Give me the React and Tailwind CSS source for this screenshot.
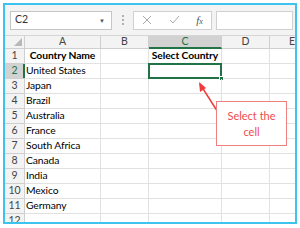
import React from "react";

const countries = ["United States","Japan","Brazil","Australia","France","South Africa","Canada","India","Mexico","Germany"];

function Row({ n, a, c, boldA, boldC, selected }) {
  return (
    <>
      <div className={`h-[15px] border-r border-b border-[#cfcfcf] flex items-center justify-center text-[10.5px] ${selected ? "bg-[#d2d2d2] text-[#217346]" : "bg-[#f3f3f3] text-[#444]"} relative`}>
        {n}
        {selected && <span className="absolute right-[-1px] top-0 bottom-0 w-[2px] bg-[#217346]" />}
      </div>
      <div className={`h-[15px] border-r border-b border-[#e1e1e1] flex items-center text-[10.3px] tracking-[-0.1px] text-black whitespace-nowrap ${boldA ? "justify-center font-bold" : "pl-[1px]"}`}>{a}</div>
      <div className="h-[15px] border-r border-b border-[#e1e1e1]" />
      <div className={`h-[15px] border-r border-b border-[#e1e1e1] flex items-center justify-center text-[10.3px] tracking-[-0.1px] text-black whitespace-nowrap relative ${boldC ? "font-bold" : ""}`}>
        {c}
        {selected && (
          <>
            <span className="absolute left-[-1px] top-[-1px] right-[-1px] bottom-[-1px] border-2 border-[#217346]" />
            <span className="absolute right-[-3px] bottom-[-3px] w-[5px] h-[5px] bg-[#217346] border border-white" />
          </>
        )}
      </div>
      <div className="h-[15px] border-r border-b border-[#e1e1e1]" />
      <div className="h-[15px] border-b border-[#e1e1e1]" />
    </>
  );
}

export default function App() {
  return (
    <div className="w-[300px] h-[228px] bg-white pt-[3px] pl-[3px]" style={{ fontFamily: "Lato, 'Open Sans', sans-serif" }}>
      <div className="w-[294px] h-[221px] border-2 border-[#3cc4ef] overflow-hidden relative bg-white">
        {/* toolbar */}
        <div className="h-[31px] bg-[#f3f3f3] flex items-center pl-[5px] pr-[2px] border-b border-[#d6d6d6]">
          <div className="w-[102px] h-[19px] bg-white border border-[#c6c6c6] flex items-center justify-between pl-[4px] pr-[6px] text-[10.5px] text-[#333]">
            <span>C2</span>
            <span className="text-[6px] text-[#555]">▼</span>
          </div>
          <div className="w-[21px] flex flex-col items-center gap-[2px]">
            <span className="w-[2px] h-[2px] bg-[#b0b0b0]" />
            <span className="w-[2px] h-[2px] bg-[#b0b0b0]" />
            <span className="w-[2px] h-[2px] bg-[#b0b0b0]" />
          </div>
          <div className="w-[79px] h-[19px] bg-white border border-[#d0d0d0] flex items-center justify-around">
            <svg width="10" height="10" viewBox="0 0 10 10"><path d="M1 1L9 9M9 1L1 9" stroke="#aaa" strokeWidth="1" /></svg>
            <svg width="11" height="10" viewBox="0 0 11 10"><path d="M1 5L4 8L10 1" stroke="#aaa" strokeWidth="1" fill="none" /></svg>
            <span className="text-[11px] italic text-[#555]" style={{ fontFamily: "'Liberation Serif', serif" }}>f<span className="text-[8px]">x</span></span>
          </div>
          <div className="ml-[4px] flex-1 h-[19px] bg-white border border-[#d0d0d0]" />
        </div>
        {/* grid */}
        <div className="grid grid-cols-[20px_76px_48px_73px_48px_60px]">
          <div className="h-[13px] bg-[#f3f3f3] border-r border-b border-[#cfcfcf] relative">
            <svg className="absolute right-[2px] bottom-[2px]" width="8" height="8" viewBox="0 0 8 8"><path d="M8 0L8 8L0 8Z" fill="#b8b8b8" /></svg>
          </div>
          {["A","B","C","D"].map((l) => (
            <div key={l} className={`h-[13px] ${l === "C" ? "bg-[#d2d2d2] border-b-2 border-b-[#217346] text-[#217346]" : "bg-[#f3f3f3] border-b border-[#cfcfcf] text-[#444]"} border-r border-r-[#cfcfcf] flex items-center justify-center text-[10.5px]`}>
              {l}
            </div>
          ))}
          <div className="h-[13px] bg-[#f3f3f3] border-b border-[#cfcfcf] text-[#444] flex items-center pl-[19px] text-[10.5px]">E</div>
          <Row n={1} a="Country Name" c="Select Country" boldA boldC />
          {countries.map((c, i) => (
            <Row key={c} n={i + 2} a={c} selected={i === 0} />
          ))}
          <Row n={12} a="" />
        </div>
        {/* callout */}
        <svg className="absolute left-[189px] top-[74px]" width="30" height="40" viewBox="0 0 30 40">
          <path d="M27 38L6 5" stroke="#ee3b3b" strokeWidth="1.5" />
          <path d="M5 3L6 13L12 9Z" fill="#ee3b3b" />
        </svg>
        <div className="absolute left-[211px] top-[96px] w-[71px] h-[45px] bg-white border border-[#f08080] flex items-center justify-center text-center text-[11px] leading-[16px] text-[#f04c4c]">
          Select the<br />cell
        </div>
      </div>
    </div>
  );
}
